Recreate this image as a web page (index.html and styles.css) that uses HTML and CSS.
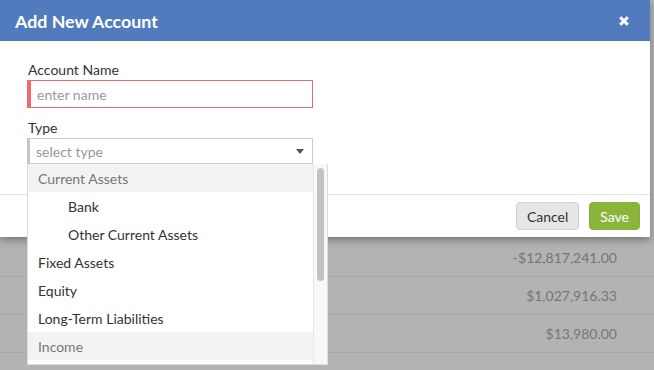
FILE: index.html
```html
<!DOCTYPE html>
<html>
<head>
<meta charset="utf-8">
<link rel="stylesheet" href="styles.css">
</head>
<body>
<div class="page">
  <div class="rows">
    <div class="row">-$12,817,241.00</div>
    <div class="row">$1,027,916.33</div>
    <div class="row">$13,980.00</div>
  </div>
</div>
<div class="modal">
  <div class="modal-header">
    <h2 class="title">Add New Account</h2>
    <span class="close"><svg width="10" height="10" viewBox="0 0 10 10"><path d="M1.2 1.2 L8.8 8.8 M8.8 1.2 L1.2 8.8" stroke="#fff" stroke-width="3"/></svg></span>
  </div>
  <div class="modal-body">
    <div class="label">Account Name</div>
    <div class="field invalid"><span class="ph">enter name</span></div>
    <div class="label type-label">Type</div>
    <div class="field select"><span class="ph">select type</span><span class="caret"></span></div>
  </div>
  <div class="modal-footer">
    <button class="btn btn-default">Cancel</button>
    <button class="btn btn-save">Save</button>
  </div>
  <div class="dropdown">
    <ul class="options">
      <li class="group">Current Assets</li>
      <li class="child">Bank</li>
      <li class="child">Other Current Assets</li>
      <li>Fixed Assets</li>
      <li>Equity</li>
      <li>Long-Term Liabilities</li>
      <li class="group">Income</li>
    </ul>
    <div class="scrollbar"><div class="thumb"></div></div>
  </div>
</div>
</body>
</html>
```
FILE: styles.css
```css
html, body {
  margin: 0;
  padding: 0;
}
body {
  width: 654px;
  height: 370px;
  overflow: hidden;
  background: #b3b3b3;
  font-family: Lato, "Open Sans", sans-serif;
  font-size: 14px;
  color: #333;
}
.page {
  padding-top: 239px;
}
.row {
  height: 37px;
  border-bottom: 1px solid #a7a7a7;
  display: flex;
  align-items: center;
  justify-content: flex-end;
  padding-right: 37px;
  color: #767676;
}
.modal {
  position: absolute;
  top: 0;
  left: 0;
  width: 650px;
  background: #fff;
  box-shadow: 0 3px 8px rgba(0, 0, 0, 0.35);
}
.modal-header {
  height: 41px;
  background: #527bbd;
  display: flex;
  align-items: center;
  justify-content: space-between;
  padding: 0 21px 0 15px;
  box-sizing: border-box;
}
.title {
  margin: 0;
  font-size: 17.8px;
  font-weight: 700;
  color: #fff;
}
.close {
  display: flex;
  width: 10px;
  height: 10px;
}
.modal-body {
  padding: 19px 27px 30px;
}
.label {
  line-height: 20px;
  height: 20px;
  color: #333;
  padding-left: 1px;
}
.type-label {
  margin-top: 10px;
}
.field {
  box-sizing: border-box;
  width: 286px;
  display: flex;
  align-items: center;
  background: #fff;
}
.invalid {
  height: 28px;
  border: 1px solid #f0696b;
  border-left: 4px solid #f0696b;
  padding-left: 6px;
}
.select {
  height: 26px;
  border: 1px solid #ccc;
  border-left: 3px solid #c6c6c6;
  padding: 0 8px 0 6px;
  justify-content: space-between;
}
.ph {
  color: #999;
}
.caret {
  width: 0;
  height: 0;
  border-left: 4px solid transparent;
  border-right: 4px solid transparent;
  border-top: 5px solid #555;
  margin-top: 1px;
}
.modal-footer {
  border-top: 1px solid #e5e5e5;
  padding: 7px 10px;
  display: flex;
  justify-content: flex-end;
  gap: 10px;
}
.btn {
  height: 28px;
  padding: 0 10px;
  font-family: Lato, "Open Sans", sans-serif;
  font-size: 14px;
  border-radius: 4px;
  box-sizing: border-box;
}
.btn-default {
  background: #e6e6e6;
  border: 1px solid #cfcfcf;
  color: #333;
}
.btn-save {
  background: #8ab53a;
  border: 1px solid #86b036;
  color: #fff;
  padding: 0 10px;
}
.dropdown {
  position: absolute;
  top: 164px;
  left: 27px;
  width: 301px;
  height: 201px;
  border: 1px solid #dcdcdc;
  border-top: 0;
  background: #fff;
  box-sizing: border-box;
  display: flex;
}
.options {
  list-style: none;
  margin: 0;
  padding: 0;
  flex: 1;
  overflow: hidden;
}
.options li {
  height: 28px;
  line-height: 30px;
  padding-left: 10px;
  color: #333;
  white-space: nowrap;
}
.options li.group {
  background: #f3f3f3;
  color: #777;
}
.options li.child {
  padding-left: 40px;
}
.scrollbar {
  width: 14px;
  background: #f8f8f8;
  border-left: 1px solid #e6e6e6;
  padding: 4px 3px 0 3px;
  box-sizing: border-box;
}
.thumb {
  height: 113px;
  background: #c2c2c2;
  border-radius: 4px;
}
```
